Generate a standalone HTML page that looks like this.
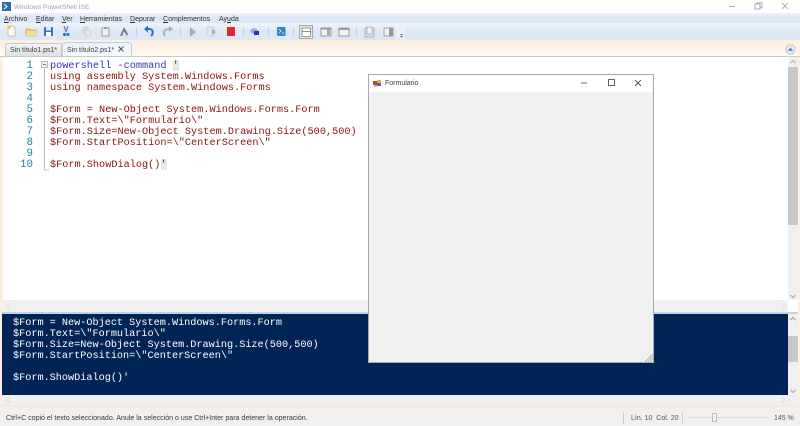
<!DOCTYPE html>
<html><head><meta charset="utf-8"><style>
html,body{margin:0;padding:0}
body{width:800px;height:426px;overflow:hidden;position:relative;background:#fff;font-family:"Liberation Sans",sans-serif}
#p{position:absolute;left:0;top:0;width:800px;height:426px;overflow:hidden;filter:blur(.35px)}
.a{position:absolute}
.t{position:absolute;white-space:pre;font-size:7px;color:#3a3a3a;line-height:10px}
.m{position:absolute;white-space:pre;font-family:"Liberation Mono",monospace;font-size:10.2px;line-height:11px}
.e{font-size:10.23px}
.r{color:#8b1212}
.w{color:#fff}
.n{position:absolute;width:24px;left:9px;text-align:right;font-family:"Liberation Mono",monospace;font-size:10.8px;line-height:11px;color:#2b7f9f}
u{text-decoration:underline;text-underline-offset:1px}
</style></head><body><div id="p">
<div class="a" style="left:0;top:0;width:800px;height:13px;background:#fff"></div>
<svg class="a" style="left:2px;top:2px" width="9" height="9"><rect width="9" height="9" fill="#2a6fa8"/><path d="M2 2l3 2.500L2 7" stroke="#fff" fill="none"/></svg>
<div class="t" style="left:14px;top:3px;font-size:6.7px;color:#a0a0a0">Windows PowerShell ISE</div>
<svg class="a" style="left:725px;top:0" width="75" height="13" fill="none" stroke="#999" stroke-width=".8"><path d="M4 6.500h6"/><rect x="30" y="4" width="5" height="5"/><path d="M32 4V2.800h5v5h-2"/><path d="M57 3l6 6M63 3l-6 6"/></svg>
<div class="a" style="left:0;top:13px;width:800px;height:10px;background:linear-gradient(#eef4fb,#dce8f6 40%,#dce8f6)"></div>
<div class="a" style="left:0;top:23px;width:800px;height:17px;background:linear-gradient(#f0f5fc,#dde8f6 45%,#dde8f6)"></div>
<div class="t" style="left:4px;top:15px;color:#333"><u>A</u>rchivo</div>
<div class="t" style="left:36px;top:15px;color:#333"><u>E</u>ditar</div>
<div class="t" style="left:62px;top:15px;color:#333"><u>V</u>er</div>
<div class="t" style="left:80px;top:15px;color:#333"><u>H</u>erramientas</div>
<div class="t" style="left:130px;top:15px;color:#333"><u>D</u>epurar</div>
<div class="t" style="left:163px;top:15px;color:#333"><u>C</u>omplementos</div>
<div class="t" style="left:219px;top:15px;color:#333">Ay<u>u</u>da</div>
<svg class="a" style="left:0;top:24px" width="410" height="16">
<path d="M8 2h5l2 2v8H8z" fill="#fffdf0" stroke="#b5b0a0" stroke-width=".7"/><circle cx="9" cy="3" r="1.800" fill="#f5c542"/>
<path d="M26 5h4l1 1h5v6H26z" fill="#eec65c" stroke="#c29a3a" stroke-width=".6"/><path d="M27 7h9v5H26z" fill="#f7e08e"/>
<rect x="44" y="3" width="9" height="9" rx="1" fill="#3d70b5"/><rect x="46" y="3" width="5" height="3.500" fill="#dfe8f4"/><rect x="46" y="8" width="5" height="4" fill="#fff"/>
<path d="M68 2l-2 6M64 2l2 6" stroke="#6a84b5" stroke-width="1.200"/><circle cx="64.500" cy="10.500" r="1.600" fill="#2d6fd0"/><circle cx="68" cy="10.500" r="1.600" fill="#2d6fd0"/>
<rect x="83" y="3" width="5" height="6" fill="#ddd" stroke="#c5c5c5" stroke-width=".6"/><rect x="85.500" y="6" width="5" height="6" fill="#e8e8e8" stroke="#c5c5c5" stroke-width=".6"/>
<rect x="102" y="4" width="7" height="8" fill="#f2f2f2" stroke="#888" stroke-width=".8"/><rect x="104" y="3" width="3" height="2" fill="#999"/>
<path d="M120 12l4-9 4 7-1 2-3-5-2 5z" fill="#777"/>
<rect x="136" y="3" width="1" height="10" fill="#c8d3e0"/>
<path d="M151 12c3-3 2-7-2-7h-2" fill="none" stroke="#2a6fc8" stroke-width="2"/><path d="M148 1.500v7l-4-3.500z" fill="#2a6fc8"/>
<path d="M165 12c-2-3-1-7 3-7h1" fill="none" stroke="#a9b0b8" stroke-width="1.800"/><path d="M169 2v6l4-3z" fill="#a9b0b8"/>
<rect x="180" y="3" width="1" height="10" fill="#c8d3e0"/>
<path d="M190 3l6 5-6 5z" fill="#a8adb3"/>
<rect x="207" y="3" width="7" height="9" fill="#e4e6e8" stroke="#bbb" stroke-width=".5"/><path d="M212 5l4 3-4 3z" fill="#aaa"/>
<rect x="227" y="3" width="8" height="9" fill="#dd2a2a"/>
<rect x="243" y="3" width="1" height="10" fill="#c8d3e0"/>
<ellipse cx="254" cy="7" rx="3.500" ry="2.800" fill="#8fb0c8"/><rect x="254" y="7" width="5" height="4" fill="#2438b0"/>
<rect x="268" y="3" width="1" height="10" fill="#c8d3e0"/>
<rect x="277" y="3" width="8.500" height="9" rx="1" fill="#2f86cf"/><path d="M279 5l2 2-2 2M282 9h2" stroke="#fff" stroke-width=".7" fill="none"/>
<rect x="293" y="3" width="1" height="10" fill="#c8d3e0"/>
<rect x="299.500" y="1.500" width="13" height="13" fill="#e6e6e4" stroke="#aaa"/><rect x="302" y="4" width="8.500" height="8.500" fill="#fff" stroke="#777" stroke-width=".7"/><path d="M302 7.500h8.500" stroke="#777" stroke-width=".8"/>
<rect x="321" y="4" width="10" height="8" fill="#f4f4f4" stroke="#888" stroke-width=".8"/><rect x="327" y="5" width="3" height="6" fill="#aaa"/><rect x="321" y="4" width="10" height="1.500" fill="#999"/>
<rect x="339" y="4" width="10" height="8" fill="#f4f4f4" stroke="#888" stroke-width=".8"/><rect x="339" y="4" width="10" height="2" fill="#999"/>
<rect x="356" y="3" width="1" height="10" fill="#c8d3e0"/>
<rect x="365" y="4" width="9" height="9" fill="#ddd" stroke="#999" stroke-width=".6"/><rect x="367" y="3" width="5" height="7" fill="#f2f2f2" stroke="#999" stroke-width=".6"/>
<rect x="384" y="4" width="9" height="8" fill="#f0f0f0" stroke="#888" stroke-width=".7"/><rect x="389" y="4" width="4" height="8" fill="#999"/>
<rect x="396" y="0" width="9" height="16" fill="#eef4fb" opacity=".6"/>
<rect x="400" y="10" width="3" height=".8" fill="#777"/><path d="M400 12h3l-1.500 1.500z" fill="#555"/>
</svg>
<div class="a" style="left:0;top:40px;width:800px;height:16px;background:linear-gradient(#fdefe0,#fff8f1)"></div>
<div class="a" style="left:5px;top:43px;height:13px;background:linear-gradient(#f3f3f2,#dfe1e3);border:1px solid #c6c8cc;border-bottom:0;border-radius:2px 2px 0 0;box-sizing:border-box;width:57px"></div>
<div class="a" style="left:62px;top:42px;width:70px;height:15px;background:linear-gradient(#e9f1fa,#f8fafd);border:1px solid #c4ced9;border-bottom:0;border-radius:3px 3px 0 0;box-sizing:border-box"></div>
<div class="t" style="left:10px;top:46px;color:#3a3a3a">Sin título1.ps1*</div>
<div class="t" style="left:67px;top:46px;color:#3a3a3a">Sin título2.ps1*</div>
<svg class="a" style="left:117px;top:45px" width="8" height="8"><path d="M1.500 1.500l5 5M6.500 1.500l-5 5" stroke="#556" stroke-width="1.100"/></svg>
<svg class="a" style="left:785px;top:44px" width="11" height="11"><circle cx="5.500" cy="5.500" r="4.800" fill="#e8e8ea" stroke="#b5b5b8" stroke-width=".7"/><path d="M2.800 6.800l2.700-3 2.700 3z" fill="#3a7ac8"/></svg>

<div class="a" style="left:0;top:56px;width:800px;height:1px;background:#c9c9c9"></div>
<div class="a" style="left:0;top:57px;width:3px;height:350px;background:#fdf0e3"></div>
<div class="a" style="left:798px;top:57px;width:2px;height:350px;background:#fdf0e3"></div>
<div class="a" style="left:3px;top:57px;width:785px;height:243px;background:#fff"></div>

<div class="a" style="left:788px;top:57px;width:10px;height:243px;background:#f0f0f0"></div>
<div class="a" style="left:788px;top:67px;width:10px;height:158px;background:#c8c8c8"></div>
<svg class="a" style="left:788px;top:59px" width="10" height="6"><path d="M2.500 4L5 1.500 7.500 4" stroke="#aaa" fill="none"/></svg>
<svg class="a" style="left:788px;top:293px" width="10" height="6"><path d="M2.500 2L5 4.500 7.500 2" stroke="#aaa" fill="none"/></svg>
<div class="a" style="left:3px;top:300px;width:785px;height:12px;background:#f0f0f0"></div>
<svg class="a" style="left:5px;top:302px" width="8" height="8"><path d="M5 1L2 4l3 3" stroke="#ddd" fill="none"/></svg>
<svg class="a" style="left:780px;top:302px" width="8" height="8"><path d="M2 1l3 3-3 3" stroke="#ddd" fill="none"/></svg>

<div class="n" style="top:61px">1</div><div class="n" style="top:72px">2</div><div class="n" style="top:83px">3</div><div class="n" style="top:94px">4</div><div class="n" style="top:105px">5</div><div class="n" style="top:116px">6</div><div class="n" style="top:127px">7</div><div class="n" style="top:138px">8</div><div class="n" style="top:149px">9</div><div class="n" style="top:160px">10</div>
<svg class="a" style="left:40px;top:60px" width="10" height="112"><rect x="1.500" y="1.500" width="6" height="6" fill="#f2f2f2" stroke="#aaa" stroke-width=".8"/><path d="M3 4.500h3" stroke="#666" stroke-width=".8"/><path d="M4.500 8V110H9" stroke="#aaa" fill="none" stroke-width=".8"/></svg>
<div class="a" style="left:173px;top:60px;width:6px;height:11px;background:#e8e8e8"></div>
<div class="a" style="left:161px;top:159px;width:6px;height:11px;background:#e8e8e8"></div>
<div class="m e" style="left:50px;top:61px;color:#2f2fe8">powershell <span style="color:#3a3ab0">-command</span> <span class="r">'</span></div>
<div class="m e r" style="left:50px;top:72px">using assembly System.Windows.Forms</div>
<div class="m e r" style="left:50px;top:83px">using namespace System.Windows.Forms</div>
<div class="m e r" style="left:50px;top:105px">$Form = New-Object System.Windows.Forms.Form</div>
<div class="m e r" style="left:50px;top:116px">$Form.Text=\"Formulario\"</div>
<div class="m e r" style="left:50px;top:127px">$Form.Size=New-Object System.Drawing.Size(500,500)</div>
<div class="m e r" style="left:50px;top:138px">$Form.StartPosition=\"CenterScreen\"</div>
<div class="m e r" style="left:50px;top:160px">$Form.ShowDialog()'</div>

<div class="a" style="left:2px;top:312px;width:796px;height:2px;background:#bcd6ee"></div>
<div class="a" style="left:2px;top:314px;width:786px;height:81px;background:#012456"></div>
<div class="m w" style="left:13px;top:318px">$Form = New-Object System.Windows.Forms.Form</div>
<div class="m w" style="left:13px;top:329px">$Form.Text=\"Formulario\"</div>
<div class="m w" style="left:13px;top:340px">$Form.Size=New-Object System.Drawing.Size(500,500)</div>
<div class="m w" style="left:13px;top:351px">$Form.StartPosition=\"CenterScreen\"</div>
<div class="m w" style="left:13px;top:373px">$Form.ShowDialog()'</div>
<div class="a" style="left:788px;top:314px;width:10px;height:81px;background:#f0f0f0"></div>
<div class="a" style="left:788px;top:336px;width:10px;height:26px;background:#c8c8c8"></div>
<svg class="a" style="left:788px;top:316px" width="10" height="6"><path d="M2.500 4L5 1.500 7.500 4" stroke="#999" fill="none"/></svg>
<svg class="a" style="left:788px;top:388px" width="10" height="6"><path d="M2.500 2L5 4.500 7.500 2" stroke="#aaa" fill="none"/></svg>
<div class="a" style="left:2px;top:395px;width:796px;height:10px;background:#f0f0f0"></div>
<svg class="a" style="left:5px;top:396px" width="8" height="8"><path d="M5 1L2 4l3 3" stroke="#ddd" fill="none"/></svg>
<svg class="a" style="left:780px;top:396px" width="8" height="8"><path d="M2 1l3 3-3 3" stroke="#ddd" fill="none"/></svg>
<div class="a" style="left:0;top:405px;width:800px;height:2px;background:#fbe9d8"></div>
<div class="a" style="left:0;top:407px;width:800px;height:19px;background:#f0f0f0"></div>
<div class="t" style="left:6px;top:414px;font-size:7.05px;color:#3a3a3a">Ctrl+C copió el texto seleccionado. Anule la selección o use Ctrl+Inter para detener la operación.</div>
<div class="a" style="left:623px;top:412px;width:1px;height:12px;background:#c8c8c8"></div>
<div class="a" style="left:682px;top:412px;width:1px;height:12px;background:#d0d0d0"></div>
<div class="t" style="left:631px;top:414px;color:#555">Lín. 10  Col. 20</div>
<div class="a" style="left:688px;top:417px;width:80px;height:1px;background:#dcdcdc"></div>
<div class="a" style="left:712px;top:413px;width:5px;height:9px;border:1px solid #bbb;background:#f2f2f2;box-sizing:border-box"></div>
<div class="t" style="left:774px;top:414px;color:#555">145 %</div>

<div class="a" style="left:368px;top:74px;width:286px;height:289px;background:#f0f0f0;border:1px solid #a8a8a8;box-sizing:border-box"></div>
<div class="a" style="left:369px;top:75px;width:284px;height:17px;background:#fff"></div>
<svg class="a" style="left:373px;top:79px" width="9" height="8"><rect x="0" y="2" width="4" height="4" fill="#c8403a"/><rect x="4" y="1" width="4" height="3" fill="#e8b030"/><rect x="4" y="4" width="4" height="3" fill="#3a70c0"/><rect x="1" y="6" width="3" height="2" fill="#b0b8c8"/></svg>
<div class="t" style="left:385px;top:79px;color:#3a3a3a">Formulario</div>
<svg class="a" style="left:578px;top:76px" width="70" height="14" fill="none" stroke="#555" stroke-width=".9"><path d="M3 7h6"/><rect x="30.500" y="3.500" width="6" height="6"/><path d="M57 4l6 6M63 4l-6 6"/></svg>
<svg class="a" style="left:645px;top:354px" width="8" height="8" stroke="#999" stroke-width=".7"><path d="M8 0L0 8M8 2.500L2.500 8M8 5L5 8"/></svg>
</div></body></html>
